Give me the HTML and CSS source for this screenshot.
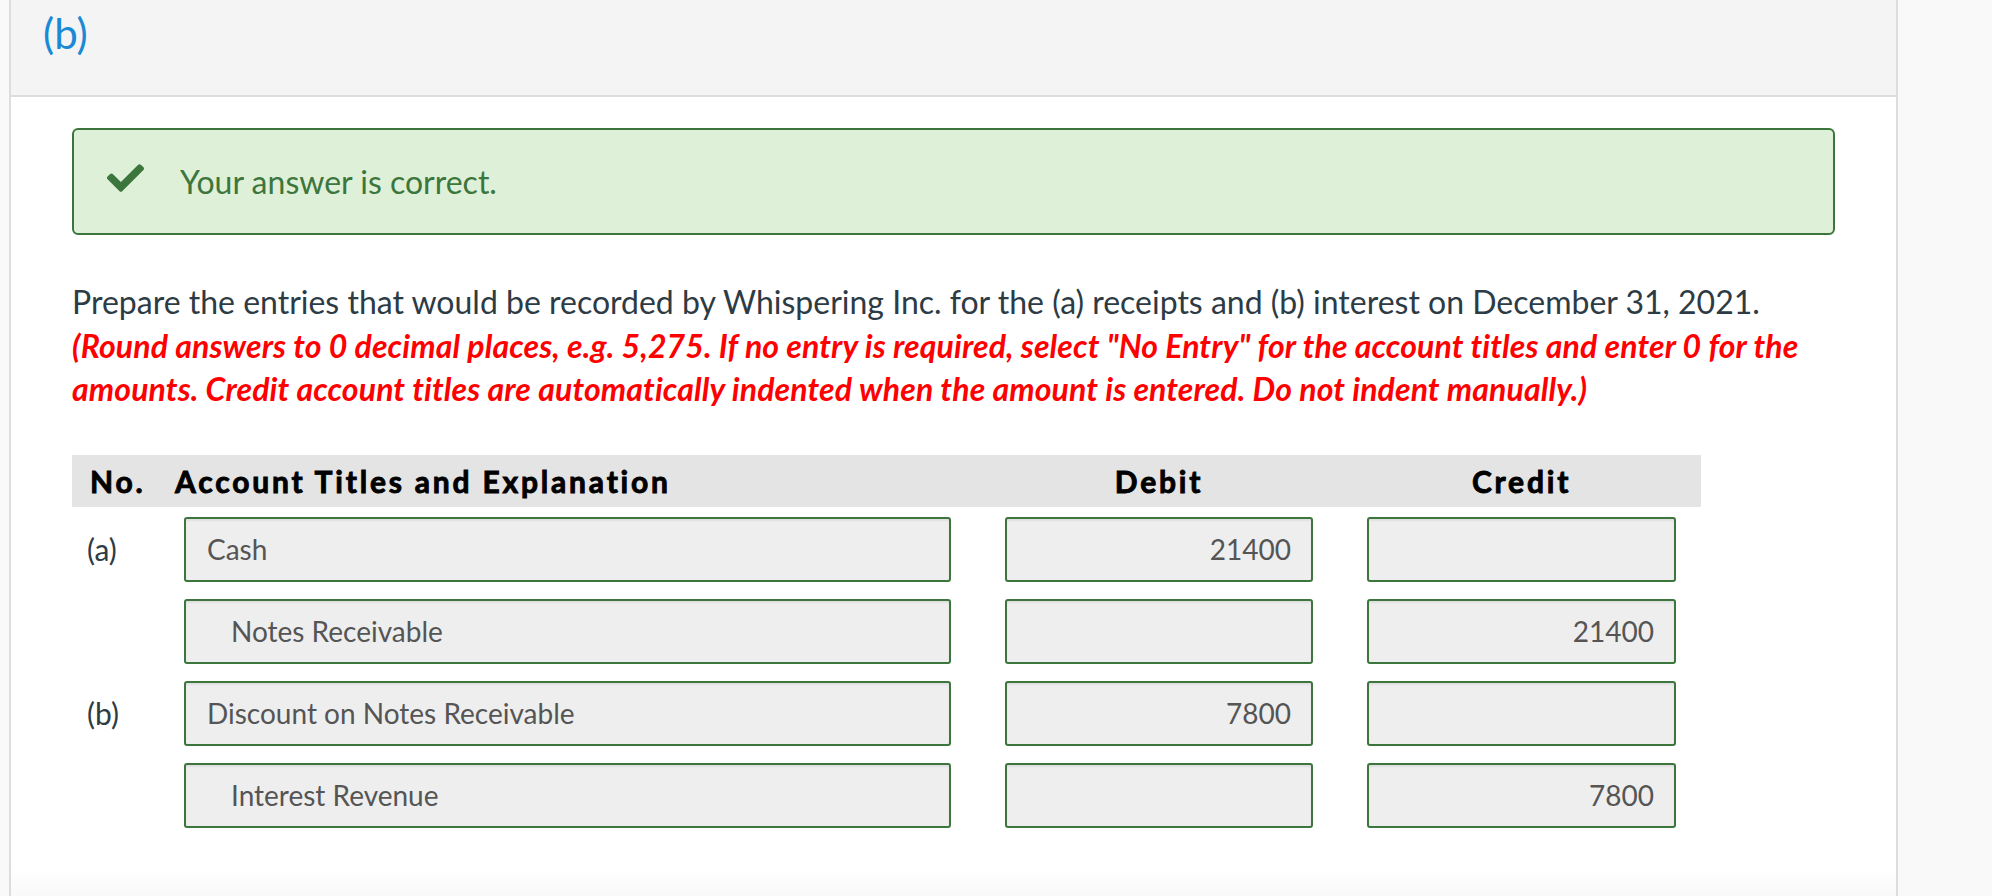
FILE: index.html
```html
<!DOCTYPE html>
<html lang="en">
<head>
<meta charset="utf-8">
<title>Journal entries</title>
<link rel="stylesheet" href="styles.css">
</head>
<body>
<div class="page">
  <section class="panel">
    <header class="panel-head">
      <span class="part-label">(b)</span>
    </header>
    <div class="panel-body">
      <div class="alert">
        <svg class="check" viewBox="0 65 512 382" aria-hidden="true">
          <path d="M173.898 439.404l-166.4-166.4c-9.997-9.997-9.997-26.206 0-36.204l36.203-36.204c9.997-9.998 26.207-9.998 36.204 0L192 312.69 432.095 72.596c9.997-9.997 26.207-9.997 36.204 0l36.203 36.204c9.997 9.997 9.997 26.206 0 36.204l-294.4 294.401c-9.998 9.997-26.207 9.997-36.204-.001z"/>
        </svg>
        <span class="alert-text">Your answer is correct.</span>
      </div>

      <p class="prompt">Prepare the entries that would be recorded by Whispering Inc. for the (a) receipts and (b) interest on December 31, 2021.<br>
        <em class="note">(Round answers to 0 decimal places, e.g. 5,275. If no entry is required, select "No Entry" for the account titles and enter 0 for the amounts. Credit account titles are automatically indented when the amount is entered. Do not indent manually.)</em></p>

      <div class="journal">
        <div class="journal-head">
          <div class="h-no">No.</div>
          <div class="h-acct">Account Titles and Explanation</div>
          <div class="h-debit">Debit</div>
          <div class="h-credit">Credit</div>
        </div>
        <div class="journal-rows">
          <div class="no">(a)</div>
          <div class="field acct">Cash</div>
          <div class="field num debit">21400</div>
          <div class="field num credit"></div>

          <div class="no"></div>
          <div class="field acct indent">Notes Receivable</div>
          <div class="field num debit"></div>
          <div class="field num credit">21400</div>

          <div class="no">(b)</div>
          <div class="field acct">Discount on Notes Receivable</div>
          <div class="field num debit">7800</div>
          <div class="field num credit"></div>

          <div class="no"></div>
          <div class="field acct indent">Interest Revenue</div>
          <div class="field num debit"></div>
          <div class="field num credit">7800</div>
        </div>
      </div>
    </div>
  </section>
</div>
</body>
</html>
```

FILE: styles.css
```css
html, body {
  margin: 0;
  padding: 0;
  background: #f9f9f9;
  font-family: Lato, "Open Sans", "Liberation Sans", sans-serif;
}

.page {
  height: 896px;
  padding-left: 9px;
  overflow: hidden;
}

.panel {
  width: 1885px;
  min-height: 896px;
  border-left: 2px solid #dddddd;
  border-right: 2px solid #dddddd;
  background: linear-gradient(to bottom, #ffffff 0, #ffffff 868px, #f9f9f9 896px);
}

.panel-head {
  height: 97px;
  box-sizing: border-box;
  background: #f4f4f4;
  border-bottom: 2px solid #dddddd;
  padding: 8px 0 0 32px;
}

.part-label {
  font-size: 42px;
  line-height: 50px;
  color: #1a8ad6;
}

.panel-body {
  padding: 31px 61px 0 61px;
}

.alert {
  height: 107px;
  box-sizing: border-box;
  background: #dff0d8;
  border: 2px solid #3c763d;
  border-radius: 6px;
  display: flex;
  align-items: center;
  padding-left: 33px;
  color: #3c763d;
}

.check {
  width: 37px;
  height: 28px;
  fill: #3c763d;
  margin-top: -8px;
  flex: none;
}

.alert-text {
  margin-left: 36px;
  font-size: 32px;
  line-height: 40px;
}

.prompt {
  margin: 45px 0 0 0;
  font-size: 32px;
  line-height: 43.5px;
  color: #2d3b45;
}

.note {
  color: #ff0000;
  font-weight: 700;
  font-style: italic;
  letter-spacing: 0.12px;
}

.journal {
  margin-top: 44px;
}

.journal-head {
  width: 1629px;
  height: 52px;
  background: #e4e4e4;
  display: flex;
  font-size: 30px;
  font-weight: 700;
  line-height: 52px;
  color: #000000;
  letter-spacing: 2.8px;
  -webkit-text-stroke: 0.9px #000000;
}

.h-no {
  width: 103px;
  box-sizing: border-box;
  padding-left: 18px;
}

.h-acct {
  width: 776px;
}

.h-debit {
  width: 308px;
  margin-left: 54px;
  text-align: center;
}

.h-credit {
  width: 309px;
  margin-left: 54px;
  text-align: center;
}

.journal-rows {
  margin-top: 10px;
  display: grid;
  grid-template-columns: 112px 767px 362px 363px;
  grid-auto-rows: 65px;
  row-gap: 17px;
}

.no {
  padding-left: 15px;
  font-size: 30px;
  line-height: 65px;
  color: #2d3b45;
}

.field {
  box-sizing: border-box;
  background: #eeeeee;
  border: 2px solid #3c763d;
  border-radius: 3px;
  box-shadow: inset 0 2px 2px rgba(0, 0, 0, 0.06);
  padding: 0 20px 0 21px;
  font-size: 28px;
  line-height: 61px;
  color: #555555;
  white-space: nowrap;
}

.field.indent {
  padding-left: 45px;
}

.field.num {
  text-align: right;
  justify-self: end;
}

.field.debit {
  width: 308px;
}

.field.credit {
  width: 309px;
}
```
